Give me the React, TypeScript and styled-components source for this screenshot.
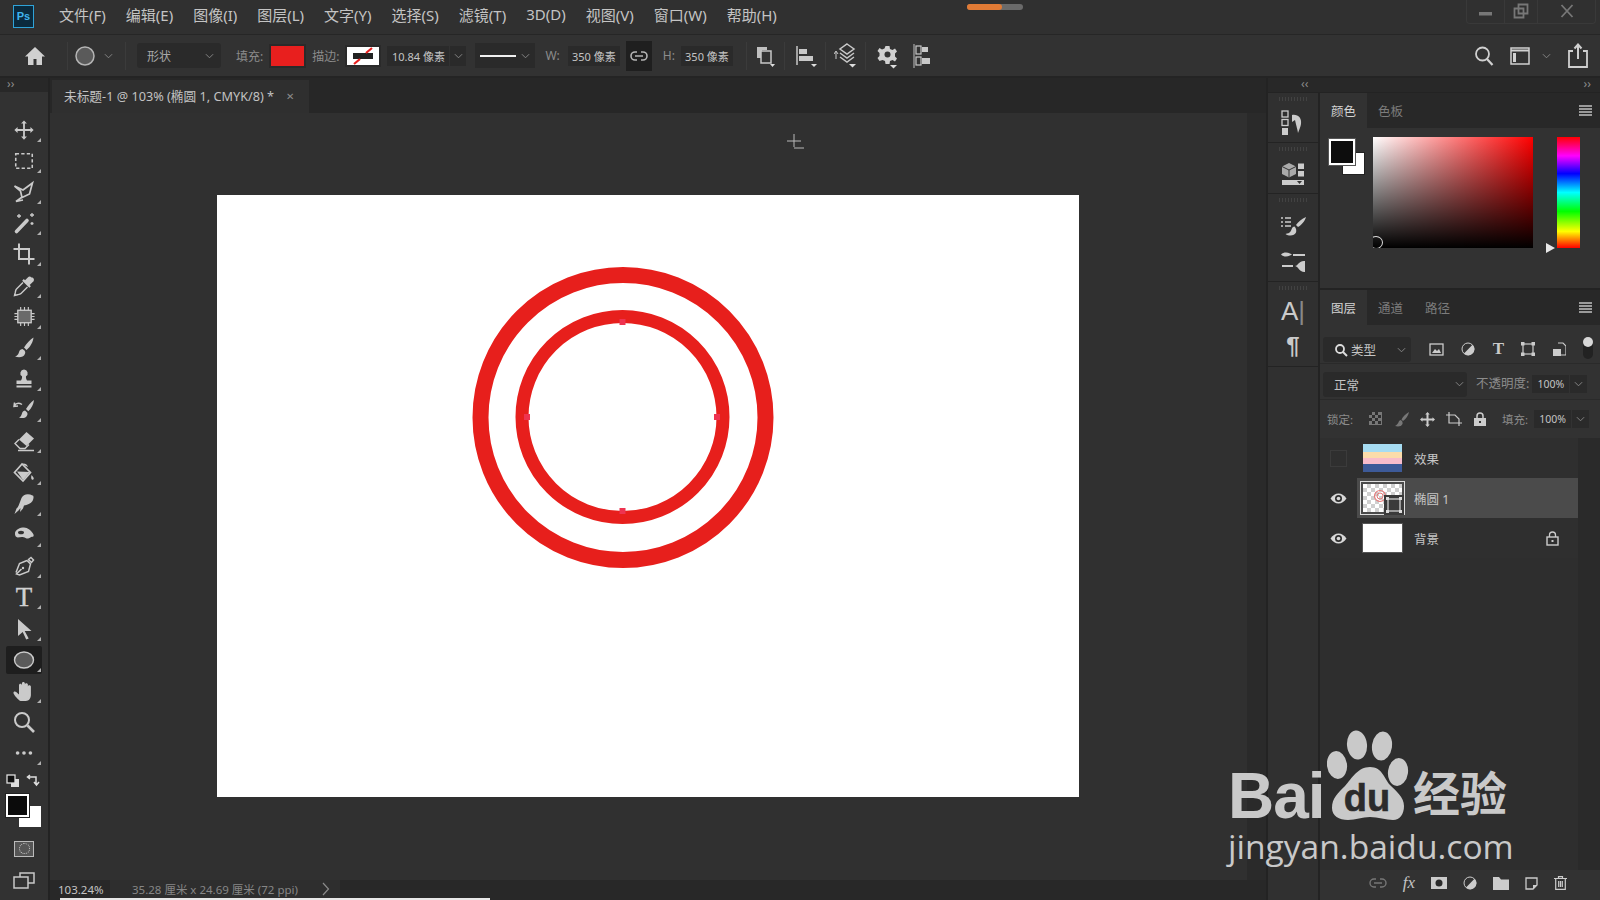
import styled, { createGlobalStyle } from "styled-components";
import type { ReactNode } from "react";

const uiFont = `"Noto Sans", "Noto Sans CJK SC", sans-serif`;

const GlobalStyle = createGlobalStyle`
    html, body {
        margin: 0;
        padding: 0;
        background: #2e2e2e;
        font-family: ${uiFont};
    }
`;

function Chevron() {
    return (
        <ChevronSvg viewBox="0 0 10 6">
            <path d="M1 1l4 4 4-4" fill="none" stroke="currentColor" strokeWidth="1"/>
        </ChevronSvg>
    );
}

function Ico({children, size = 24}: { children: ReactNode; size?: number }) {
    return <IcoSvg viewBox="0 0 24 24" $size={size}>{children}</IcoSvg>;
}

function HamburgerIcon() {
    return (
        <PanelMenu>
            <i/><i/><i/><i/>
        </PanelMenu>
    );
}

function EyeIcon() {
    return (
        <svg width="17" height="11" viewBox="0 0 17 11">
            <path d="M.5 5.5C3 2 5.5.5 8.5.5s5.5 1.5 8 5c-2.5 3.5-5 5-8 5s-5.5-1.5-8-5z" fill="#d8d8d8"/>
            <circle cx="8.5" cy="5.5" r="3.5" fill="#2f2f2f"/>
            <circle cx="8.5" cy="5.5" r="1.8" fill="#d8d8d8"/>
        </svg>
    );
}

const line = {fill: "none", stroke: "currentColor", strokeWidth: 1.7};

function getTools(): { icon: ReactNode; active?: boolean; flyout?: boolean }[] {
    return [
        {flyout: true, icon: <Ico size={22}><path d="M12 1.5l3.2 3.4h-2.2v6h6V8.7l3.5 3.3-3.5 3.3V13h-6v6.1h2.2L12 22.5l-3.2-3.4H11v-6H5v2.3L1.5 12 5 8.7V11h6V4.9H8.8z"/></Ico>},
        {flyout: true, icon: <Ico size={22}><rect x="3" y="4" width="18" height="16" {...line} strokeDasharray="3.6 2.4"/></Ico>},
        {flyout: true, icon: <Ico><path d="M2.5 6l8.5 4 9.5-7-3 11-7.5 3.5-1.5-6.5zM9.5 17.5L4 21.5l7-1.5" {...line}/></Ico>},
        {flyout: true, icon: <Ico><path d="M4.5 20.5L15 9.5" fill="none" stroke="currentColor" strokeWidth="3.6" strokeLinecap="round"/><path d="M7 3v4M5 5h4M20 2v4M18 4h4M20 11v3M18.5 12.5h3" {...line} strokeWidth={1.3}/></Ico>},
        {flyout: true, icon: <Ico><path d="M7 1.5V17h15.5M1.5 7H17v15.5" {...line} strokeWidth={2}/></Ico>},
        {flyout: true, icon: <Ico><path d="M19.5 3.5a2.6 2.6 0 0 0-3.7 0L13 6.3l-1.2-1.2-1.6 1.6 7.1 7.1 1.6-1.6-1.2-1.2 2.8-2.8a2.6 2.6 0 0 0 0-4.7z"/><path d="M11 8.5L4.5 15c-1 1-1 2.4-1.2 3.5l-.8 3 3-.8c1.1-.2 2.5-.2 3.5-1.2l6.500-6.500" {...line} strokeWidth={1.4}/></Ico>},
        {flyout: true, icon: <Ico size={23}><rect x="5" y="5.5" width="14" height="13" fill="#6a6a6a" stroke="currentColor" strokeWidth="1.4"/><path d="M8 2v3.5M12 2v3.5M16 2v3.5M8 18.5V22M12 18.5V22M16 18.5V22M1.5 9H5M1.5 12H5M1.5 15H5M19 9h3.5M19 12h3.5M19 15h3.5" {...line} strokeWidth={1.2}/></Ico>},
        {flyout: true, icon: <Ico><path d="M21.5 1.5c-3.2 2-7 6-9.5 10l2.5 2.5c3.800-3 6.500-8 7-12.500zM10.500 13c-2.500.3-3.200 2-3.700 3.800-.5 1.700-1.800 3.300-3.800 3.700 3.500 1.200 8.500 1.200 10-2.800.5-1.300.2-2.600-.5-3.300z"/></Ico>},
        {flyout: true, icon: <Ico><path d="M12 2.500a3.700 3.700 0 0 0-2 6.800c.3 1.700-.3 3.200-1 4.200H4.500V17h15v-3.500H15c-.7-1-1.300-2.500-1-4.200a3.700 3.700 0 0 0-2-6.800z"/><rect x="4.5" y="18.500" width="15" height="2"/></Ico>},
        {flyout: true, icon: <Ico><path d="M22 2c-3 2-6 5.500-8 9l2.300 2.300c3-2.800 5.300-7 5.700-11.300zM13 12.500c-2.200.3-2.700 2-3.200 3.400-.4 1.500-1.300 3-2.800 3.600 3 1.100 7 1 8.300-2.500.4-1.100.2-2.200-.4-2.800z"/><path d="M2 8c2-3 5-3.500 8-1.500M2.500 4.500L2 8.500l4-.5" {...line} strokeWidth={1.5}/></Ico>},
        {flyout: true, icon: <Ico><path d="M14.500 3L22 9.500 14.500 17l-7.500-6.500z"/><path d="M7 10.500L3 14.500l5 5h5l4-4M6 21.500h16" {...line} strokeWidth={1.4}/></Ico>},
        {flyout: true, icon: <Ico><path d="M10 3L2.500 11.500 11 20l7.500-8.500z" {...line}/><path d="M5 10.500L18 11l-7 8zM10 3c1-1 5-1 6 3M19.500 14c2 2 3 3.500 1.800 4.500-1.500 1-2.800-1-1.800-4.500z"/></Ico>},
        {flyout: true, icon: <Ico><path d="M20.500 3.500C16 1 11 2.500 9.500 6L8 10c-1 2-1.500 5-3.500 6.500L2.500 22l4-3.500 2-2.500-.5 4 3-3.500 1-3c3-.5 7-2 8.500-4.500 1.300-2.500 1.300-4.500.5-5.500z"/></Ico>},
        {flyout: true, icon: <Ico><path d="M3 10c.5-3.500 5-5.500 9-5.500 3.500 0 7.500 3 9.500 7 .5 1.300 0 2.500-1.500 2.300-1.200-.1-1.800 1.500-3.800 1.700-2 .2-3-1-4.500-1.300-2.500-.5-4 .2-6 .2C4 14.400 2.700 12.500 3 10z"/><ellipse cx="9" cy="9.5" rx="3" ry="1.8" fill="#323232"/></Ico>},
        {flyout: true, icon: <Ico><path d="M19 3.500l2.500 2.500-2 2.500-3-3zM15 6.500l3.500 3.500-2 7.500-9 3.500-3-1 5-5M15 6.500L7.500 9.500l-3.500 9" {...line} strokeWidth={1.5}/><circle cx="11" cy="14" r="1.2"/></Ico>},
        {flyout: true, icon: <ToolLetter>T</ToolLetter>},
        {flyout: true, icon: <Ico><path d="M6 2l13.500 12h-6.800l4 7.500-2.500 1-3.500-7.500L6 19z"/></Ico>},
        {flyout: true, active: true, icon: <Ico><ellipse cx="12" cy="12" rx="9.5" ry="8" fill="#5a5a5a" stroke="currentColor" strokeWidth="1.4"/></Ico>},
        {flyout: true, icon: <Ico><path d="M8.500 22c-2.500-1.300-6.500-6-7-7.800-.4-1.700 1.500-2.200 2.700-1.200L7 15.500V6.200c0-2 2.700-2 2.900 0V4.500c0-2 2.900-2 3 0v1c.2-1.800 3-1.800 3 .2v1.800c.2-1.700 3-1.700 3 .3V16c0 3-2 6-5 6z"/></Ico>},
        {icon: <Ico><circle cx="10" cy="10" r="7" {...line} strokeWidth={2}/><path d="M15.500 15.500L22 22" {...line} strokeWidth={2.6}/></Ico>},
        {flyout: true, icon: <Ico size={22}><circle cx="5" cy="12" r="2"/><circle cx="12" cy="12" r="2"/><circle cx="19" cy="12" r="2"/></Ico>},
    ];
}

function App() {
    return (
        <>
            <GlobalStyle/>
            <Page>
                <MenuBar>
                    <PsLogo>Ps</PsLogo>
                    <MenuList>
                        {["文件(F)", "编辑(E)", "图像(I)", "图层(L)", "文字(Y)", "选择(S)", "滤镜(T)", "3D(D)", "视图(V)", "窗口(W)", "帮助(H)"].map(m => (
                            <MenuItem key={m}>{m}</MenuItem>
                        ))}
                    </MenuList>
                    <ProgressTrack><ProgressFill/></ProgressTrack>
                    <WindowControls>
                        <WinButton $w={37}><svg width="14" height="12" viewBox="0 0 14 12"><rect x="0" y="7" width="13" height="3.5" fill="#777"/></svg></WinButton>
                        <WinButton $w={32}><svg width="16" height="16" viewBox="0 0 16 16"><path d="M5.5 1.5h9v9h-9zM1.5 5.5h9v9h-9z" fill="none" stroke="#777" strokeWidth="1.8"/></svg></WinButton>
                        <WinButton $w={57}><svg width="14" height="14" viewBox="0 0 14 14"><path d="M1.5 1l11 12M12.5 1l-11 12" stroke="#777" strokeWidth="1.8"/></svg></WinButton>
                    </WindowControls>
                </MenuBar>

                <OptionsBar>
                    <HomeButton>
                        <svg width="22" height="20" viewBox="0 0 22 20"><path d="M11 1L1 10.5h3V19h5.5v-6h3v6H18v-8.500h3z" fill="#d0d0d0"/></svg>
                    </HomeButton>
                    <OptSep/>
                    <ShapePicker>
                        <svg width="22" height="22" viewBox="0 0 22 22"><circle cx="11" cy="11" r="9" fill="#5a5a5a" stroke="#b5b5b5" strokeWidth="1.5"/></svg>
                        <Chevron/>
                    </ShapePicker>
                    <OptSep/>
                    <OptSelect $w={84} $ml={11}><span>形状</span><Chevron/></OptSelect>
                    <OptLabel $ml={15}>填充:</OptLabel>
                    <ColorSwatch $ml={8}/>
                    <OptLabel $ml={8}>描边:</OptLabel>
                    <StrokeSwatch $ml={8}>
                        <svg width="32" height="18" viewBox="0 0 32 18">
                            <rect x="6" y="6" width="20" height="6" fill="#222"/>
                            <path d="M25 1L19 6M13 12L7 17" stroke="#e8201f" strokeWidth="2.2"/>
                        </svg>
                    </StrokeSwatch>
                    <OptInput $w={62} $ml={8}>10.84 像素</OptInput>
                    <OptDrop><Chevron/></OptDrop>
                    <LineSelect><LineSample/><Chevron/></LineSelect>
                    <OptLabel $ml={10}>W:</OptLabel>
                    <OptInput $w={52} $ml={8}>350 像素</OptInput>
                    <LinkButton>
                        <svg width="18" height="12" viewBox="0 0 18 12"><path d="M7 2H5a4 4 0 0 0 0 8h2M11 2h2a4 4 0 0 1 0 8h-2M5 6h8" fill="none" stroke="#b5b5b5" strokeWidth="1.6"/></svg>
                    </LinkButton>
                    <OptLabel $ml={11}>H:</OptLabel>
                    <OptInput $w={52} $ml={6}>350 像素</OptInput>
                    <OptSep $ml={13}/>
                    <OptIcon $ml={7}>
                        <svg width="22" height="24" viewBox="0 0 22 24"><path d="M3 3h10v3H8v8H3z" fill="#c0c0c0"/><rect x="7" y="7" width="10" height="12" fill="#333" stroke="#c8c8c8" strokeWidth="1.5"/><path d="M16 20h5l-2.5 3z" fill="#ddd"/></svg>
                    </OptIcon>
                    <OptSep $ml={8}/>
                    <OptIcon $ml={9}>
                        <svg width="24" height="24" viewBox="0 0 24 24"><path d="M3 2v19" stroke="#c8c8c8" strokeWidth="1.5"/><rect x="5" y="5" width="8" height="5" fill="#c8c8c8"/><rect x="5" y="12" width="14" height="5" fill="#c8c8c8"/><path d="M17 20h6l-3 3z" fill="#ddd"/></svg>
                    </OptIcon>
                    <OptSep $ml={7}/>
                    <OptIcon $ml={8}>
                        <svg width="24" height="26" viewBox="0 0 24 26"><path d="M13 1l7 5-7 5-7-5z" fill="none" stroke="#c8c8c8" strokeWidth="1.5"/><path d="M6 10l7 5 7-5M6 14l7 5 7-5" fill="none" stroke="#c8c8c8" strokeWidth="1.5"/><path d="M2 16V9M0 11l2-3 2 3" fill="none" stroke="#c8c8c8"/><path d="M15 21h7l-3.5 3.5z" fill="#ddd"/></svg>
                    </OptIcon>
                    <OptSep $ml={7}/>
                    <OptIcon $ml={10}>
                        <svg width="24" height="26" viewBox="0 0 24 26"><path d="M9.5 2h4l.5 3 2.5 1 2.5-1.5 2 3-2 2v3l2 2-2 3-2.5-1.5-2.5 1-.5 3h-4l-.5-3-2.5-1L3.500 17l-2-3 2-2V9l-2-2 2-3L6 5.500l2.500-1z" fill="#d0d0d0" transform="translate(0 1)"/><circle cx="11.5" cy="11.5" r="3" fill="#333"/><path d="M14 22h7l-3.5 3.5z" fill="#ddd"/></svg>
                    </OptIcon>
                    <OptIcon $ml={11}>
                        <svg width="20" height="26" viewBox="0 0 20 26"><path d="M3 1v24" stroke="#c0c0c0"/><rect x="5" y="3" width="5" height="8" fill="none" stroke="#c8c8c8" strokeWidth="1.2"/><rect x="11" y="4" width="6" height="5" fill="#c8c8c8"/><rect x="5" y="14" width="5" height="8" fill="none" stroke="#c8c8c8" strokeWidth="1.2"/><rect x="11" y="15" width="8" height="6" fill="#c8c8c8"/></svg>
                    </OptIcon>
                    <OptRight>
                        <svg width="20" height="22" viewBox="0 0 20 22"><circle cx="8.5" cy="9" r="6.5" fill="none" stroke="#d0d0d0" strokeWidth="1.8"/><path d="M13 14l5.5 6" stroke="#d0d0d0" strokeWidth="2.2"/></svg>
                        <WorkspaceBox><svg width="20" height="18" viewBox="0 0 20 18"><rect x="1" y="1" width="18" height="16" fill="none" stroke="#d0d0d0" strokeWidth="1.5"/><path d="M1 3.5h18" stroke="#d0d0d0" strokeWidth="2"/><rect x="3" y="6" width="3" height="9" fill="#d0d0d0"/></svg><Chevron/></WorkspaceBox>
                        <svg width="22" height="26" viewBox="0 0 22 26"><path d="M6 8H2v16h18V8h-4" fill="none" stroke="#d0d0d0" strokeWidth="1.8"/><path d="M11 16V2M7.5 5.500L11 1.500l3.500 4" fill="none" stroke="#d0d0d0" strokeWidth="2"/></svg>
                    </OptRight>
                </OptionsBar>

                <Workspace>
                    <ToolBar>
                        <CollapseStrip>››</CollapseStrip>
                        <ToolList>
                            {getTools().map((t, i) => (
                                <ToolCell key={i}>
                                    <ToolButton $active={t.active} $flyout={t.flyout}>{t.icon}</ToolButton>
                                </ToolCell>
                            ))}
                        </ToolList>
                        <MiniRow>
                            <svg width="14" height="14" viewBox="0 0 14 14"><rect x="5" y="5" width="8" height="8" fill="#ddd"/><rect x="1" y="1" width="8" height="8" fill="#111" stroke="#ddd" strokeWidth="1.3"/></svg>
                            <svg width="14" height="14" viewBox="0 0 14 14"><path d="M2 3h8v7M8 8l2.5 3L13 8M4 1L1.5 3 4 5" fill="none" stroke="#ddd" strokeWidth="1.5"/></svg>
                        </MiniRow>
                        <SwatchStack>
                            <BackSwatch/>
                            <FrontSwatch/>
                        </SwatchStack>
                        <QuickMask><i/></QuickMask>
                        <ScreenMode>
                            <svg width="22" height="17" viewBox="0 0 22 17"><rect x="7" y="1" width="14" height="10" fill="none" stroke="#c8c8c8" strokeWidth="1.5"/><rect x="1" y="5" width="14" height="11" fill="#323232" stroke="#c8c8c8" strokeWidth="1.5"/></svg>
                        </ScreenMode>
                    </ToolBar>

                    <DocColumn>
                        <TabBar>
                            <DocTab>
                                <span>未标题-1 @ 103% (椭圆 1, CMYK/8) *</span>
                                <TabClose>✕</TabClose>
                            </DocTab>
                        </TabBar>
                        <DocBody>
                            <Pasteboard>
                                <CursorMark>
                                    <svg width="20" height="20" viewBox="0 0 20 20"><path d="M8 1v13M1 8h14M8 15h10" stroke="#b9b9b9" strokeWidth="1"/></svg>
                                </CursorMark>
                                <Artboard>
                                    <svg width="862" height="602" viewBox="0 0 862 602">
                                        <circle cx="406" cy="222.5" r="142.5" fill="none" stroke="#e71f1c" strokeWidth="16"/>
                                        <circle cx="405.5" cy="222" r="100.5" fill="none" stroke="#e71f1c" strokeWidth="13"/>
                                        <g fill="#ee3350">
                                            <rect x="402.5" y="124" width="6" height="6"/>
                                            <rect x="402.5" y="313" width="6" height="6"/>
                                            <rect x="307" y="219" width="6" height="6"/>
                                            <rect x="497" y="219" width="6" height="6"/>
                                        </g>
                                    </svg>
                                </Artboard>
                            </Pasteboard>
                            <VScroll/>
                        </DocBody>
                        <StatusBar>
                            <StatusRow>
                                <ZoomValue>103.24%</ZoomValue>
                                <DocInfo>
                                    <span>35.28 厘米 x 24.69 厘米 (72 ppi)</span>
                                    <svg width="8" height="14" viewBox="0 0 8 14"><path d="M1 1l5.5 6L1 13" fill="none" stroke="#8a8a8a" strokeWidth="1.2"/></svg>
                                </DocInfo>
                            </StatusRow>
                            <EdgeLine/>
                        </StatusBar>
                    </DocColumn>

                    <DockArea>
                        <DockStrip>
                            <span>‹‹</span>
                            <span>››</span>
                        </DockStrip>
                        <DockRow>
                            <IconDock>
                                <DockGroup $h={50} $top={12}>
                                    <svg width="24" height="28" viewBox="0 0 24 28"><rect x="1" y="1" width="6" height="6" fill="none" stroke="#ccc" strokeWidth="1.3"/><rect x="1" y="9.5" width="6" height="6" fill="none" stroke="#ccc" strokeWidth="1.3"/><rect x="1" y="18" width="6" height="7" fill="#ccc"/><path d="M11 5c6-1 10 3 9 9-.4 3-2 6-3 9-.5-4-2-8-3-13l-3 2z" fill="#ccc"/></svg>
                                </DockGroup>
                                <DockGroup $h={51} $top={12}>
                                    <svg width="24" height="24" viewBox="0 0 24 24"><path d="M8 1l7 3.5V12l-7 3.5L1 12V4.500z" fill="#aaa"/><path d="M8 8v7.5M1 4.5L8 8l7-3.500" stroke="#333" fill="none"/><rect x="17" y="1.5" width="6" height="5.5" fill="#ccc"/><rect x="17" y="9" width="6" height="5.5" fill="#ccc"/><rect x="1" y="18" width="22" height="5" fill="#ccc"/><path d="M16 19h5l-2.5 3z" fill="#333"/></svg>
                                </DockGroup>
                                <DockGroup $h={88} $gap={13} $top={14}>
                                    <svg width="26" height="22" viewBox="0 0 26 22"><path d="M1 2h2M5 2h6M1 6h2M5 6h6M1 10h2M5 10h6" stroke="#ccc" strokeWidth="1.6"/><path d="M26 1c-4 1.5-8 5-10 8l2 2c3.5-2 7-6 8-10zM14.5 10.5c-3 .5-2.5 3-4 5-1 1.5-3 2-5 2.5 3.5 2.5 9 2 10.5-1.5.7-2 .1-4.5-1.5-6z" fill="#ccc"/></svg>
                                    <svg width="26" height="22" viewBox="0 0 26 22"><path d="M1 3.5c2.5-2.5 6-2.500 9-1l2 1-2 1c-3 1.500-6.500 1.500-9-1z" fill="#ccc"/><path d="M13 4h12M2 15h11" stroke="#ccc" strokeWidth="2"/><path d="M25 10v11c-2 .5-5-1-7-4-.7-1-2-2-3-2 1 0 2.300-1 3-2 1.500-2 4-3.500 7-3z" fill="#ccc"/></svg>
                                </DockGroup>
                                <DockGroup $h={85} $gap={7} $top={8}>
                                    <DockLetter>A<em>|</em></DockLetter>
                                    <DockLetter $small>¶</DockLetter>
                                </DockGroup>
                            </IconDock>
                            <Panels>
                                <ColorPanel>
                                    <PanelTabs>
                                        <PanelTab $active>颜色</PanelTab>
                                        <PanelTab>色板</PanelTab>
                                        <HamburgerIcon/>
                                    </PanelTabs>
                                    <ColorBody>
                                        <PanelSwatches>
                                            <PanelBack/>
                                            <PanelFront/>
                                        </PanelSwatches>
                                        <ColorField><FieldPicker/></ColorField>
                                        <HueSlider><HueThumb/></HueSlider>
                                    </ColorBody>
                                </ColorPanel>
                                <LayersPanel>
                                    <PanelTabs>
                                        <PanelTab $active>图层</PanelTab>
                                        <PanelTab>通道</PanelTab>
                                        <PanelTab>路径</PanelTab>
                                        <HamburgerIcon/>
                                    </PanelTabs>
                                    <FilterRow>
                                        <FilterSelect>
                                            <svg width="14" height="14" viewBox="0 0 14 14"><circle cx="6" cy="6" r="4" fill="none" stroke="#ddd" strokeWidth="1.8"/><path d="M9 9l4 4" stroke="#ddd" strokeWidth="2"/></svg>
                                            <span>类型</span>
                                            <Chevron/>
                                        </FilterSelect>
                                        <FilterIcons>
                                            <svg width="15" height="13" viewBox="0 0 15 13"><rect x="1" y="1" width="13" height="11" fill="none" stroke="#ccc" strokeWidth="1.3"/><path d="M3 10l3-4 2 2 2-2 2 4z" fill="#ccc"/></svg>
                                            <svg width="14" height="14" viewBox="0 0 14 14"><circle cx="7" cy="7" r="6" fill="#333" stroke="#ccc" strokeWidth="1"/><path d="M11.5 2.8A6 6 0 0 1 3 11.5z" fill="#ccc"/></svg>
                                            <FilterLetter>T</FilterLetter>
                                            <svg width="14" height="14" viewBox="0 0 14 14"><rect x="2" y="2" width="10" height="10" fill="none" stroke="#ccc" strokeWidth="1.2"/><g fill="#ccc"><rect width="3.5" height="3.5"/><rect x="10.5" width="3.5" height="3.5"/><rect y="10.5" width="3.5" height="3.5"/><rect x="10.5" y="10.5" width="3.5" height="3.5"/></g></svg>
                                            <svg width="13" height="14" viewBox="0 0 13 14"><path d="M5 1h5l3 3v9H8" fill="none" stroke="#ccc" strokeWidth="1.2"/><rect x="0" y="7" width="8" height="7" fill="#ccc"/></svg>
                                            <FilterToggle/>
                                        </FilterIcons>
                                    </FilterRow>
                                    <BlendRow>
                                        <BlendSelect><span>正常</span><Chevron/></BlendSelect>
                                        <OpacityLabel>不透明度:</OpacityLabel>
                                        <PercentBox $ml={3}>100%</PercentBox>
                                        <PercentDrop><Chevron/></PercentDrop>
                                    </BlendRow>
                                    <LockRow>
                                        <RowLabel $ml={7}>锁定:</RowLabel>
                                        <LockIcons>
                                            <LockCell>
                                                <svg width="13" height="13" viewBox="0 0 13 13"><rect width="13" height="13" fill="#777"/><path d="M0 0h3v3H0zM6 0h3v3H6zM3 3h3v3H3zM9 3h3v3H9zM0 6h3v3H0zM6 6h3v3H6zM3 9h3v3H3zM9 9h3v3H9z" fill="#2f2f2f"/></svg>
                                            </LockCell>
                                            <LockCell>
                                                <svg width="15" height="15" viewBox="0 0 15 15"><path d="M15 0c-3 1.5-6 4.5-7.5 7.5L9 9c3-2 5.5-5.5 6-9zM6.5 8C4 9 5 12 1 14c3 1 6.5.5 7.500-2 .4-1.500 0-3-2-4z" fill="#777"/></svg>
                                            </LockCell>
                                            <LockCell>
                                                <svg width="15" height="15" viewBox="0 0 15 15"><path d="M7.5 0l2.3 2.5H8.500v4h4V5.200L15 7.500l-2.500 2.300V8.500h-4v4h1.300L7.500 15l-2.300-2.500h1.300v-4h-4v1.300L0 7.500l2.500-2.300v1.300h4v-4H5.200z" fill="#ccc"/></svg>
                                            </LockCell>
                                            <LockCell>
                                                <svg width="16" height="14" viewBox="0 0 16 14"><path d="M3 0v11h13M0 3h9l4 4v7" fill="none" stroke="#ccc" strokeWidth="1.2"/></svg>
                                            </LockCell>
                                            <LockCell>
                                                <svg width="12" height="14" viewBox="0 0 12 14"><path d="M3 6V4a3 3 0 0 1 6 0v2" fill="none" stroke="#ccc" strokeWidth="1.5"/><rect y="6" width="12" height="8" fill="#ccc"/><rect x="5" y="9" width="2" height="2" fill="#333"/></svg>
                                            </LockCell>
                                        </LockIcons>
                                        <RowLabel $ml={13}>填充:</RowLabel>
                                        <PercentBox $ml={6}>100%</PercentBox>
                                        <PercentDrop><Chevron/></PercentDrop>
                                    </LockRow>
                                    <LayerArea>
                                        <LayerList>
                                            <LayerRow>
                                                <EyeCell><HiddenBox/></EyeCell>
                                                <LayerBody>
                                                    <StripeThumb/>
                                                    <LayerName>效果</LayerName>
                                                </LayerBody>
                                            </LayerRow>
                                            <LayerRow>
                                                <EyeCell><EyeIcon/></EyeCell>
                                                <LayerBody $selected>
                                                    <CheckerThumb>
                                                        <svg width="38" height="28" viewBox="0 0 38 28"><circle cx="17" cy="12" r="5.5" fill="none" stroke="#e57a7a" strokeWidth="1.2"/><circle cx="17" cy="12" r="3" fill="none" stroke="#e57a7a" strokeWidth="1"/></svg>
                                                        <ShapeBadge>
                                                            <svg width="16" height="16" viewBox="0 0 16 16"><rect x="2" y="2" width="12" height="12" fill="none" stroke="#ddd" strokeWidth="1.2"/><g fill="#ddd"><rect width="3" height="3"/><rect x="13" width="3" height="3"/><rect y="13" width="3" height="3"/><rect x="13" y="13" width="3" height="3"/></g></svg>
                                                        </ShapeBadge>
                                                    </CheckerThumb>
                                                    <LayerName>椭圆 1</LayerName>
                                                </LayerBody>
                                            </LayerRow>
                                            <LayerRow>
                                                <EyeCell><EyeIcon/></EyeCell>
                                                <LayerBody>
                                                    <WhiteThumb/>
                                                    <LayerName>背景</LayerName>
                                                    <LayerLock>
                                                        <svg width="13" height="15" viewBox="0 0 13 15"><path d="M3.5 6V4a3 3 0 0 1 6 0v2" fill="none" stroke="#ccc" strokeWidth="1.3"/><rect x="1" y="6" width="11" height="8" fill="none" stroke="#ccc" strokeWidth="1.4"/><rect x="5.5" y="9" width="2" height="2" fill="#ccc"/></svg>
                                                    </LayerLock>
                                                </LayerBody>
                                            </LayerRow>
                                        </LayerList>
                                        <LayerScroll/>
                                    </LayerArea>
                                    <LayerFooter>
                                        <svg width="18" height="10" viewBox="0 0 18 10"><path d="M7 1H5a4 4 0 0 0 0 8h2M11 1h2a4 4 0 0 1 0 8h-2M5 5h8" fill="none" stroke="#777" strokeWidth="1.4"/></svg>
                                        <FxLabel>fx</FxLabel>
                                        <svg width="16" height="12" viewBox="0 0 16 12"><rect width="16" height="12" fill="#ccc"/><circle cx="8" cy="6" r="3.5" fill="#2b2b2b"/></svg>
                                        <svg width="14" height="14" viewBox="0 0 14 14"><circle cx="7" cy="7" r="6" fill="#333" stroke="#ccc"/><path d="M11.5 2.8A6 6 0 0 1 3 11.5z" fill="#ccc"/></svg>
                                        <svg width="16" height="13" viewBox="0 0 16 13"><path d="M0 0h6l2 2.5h8V13H0z" fill="#ccc"/></svg>
                                        <svg width="13" height="13" viewBox="0 0 13 13"><path d="M1 1h11v7l-4 4H1z" fill="none" stroke="#ccc" strokeWidth="1.3"/><path d="M8 8h4l-4 4z" fill="#ccc"/></svg>
                                        <svg width="13" height="14" viewBox="0 0 13 14"><path d="M0 2.500h13M4.500 2V.7h4V2M1.700 3v10.300h9.600V3M4.700 5v6M6.500 5v6M8.300 5v6" fill="none" stroke="#ccc" strokeWidth="1.2"/></svg>
                                    </LayerFooter>
                                </LayersPanel>
                            </Panels>
                        </DockRow>
                    </DockArea>
                </Workspace>

                <Watermark>
                    <WatermarkTop>
                        <BaiText>Bai</BaiText>
                        <PawSvg viewBox="1327 730 83 92">
                            <g fill="#c9c9c9">
                                <ellipse cx="1337" cy="765" rx="10" ry="14" transform="rotate(-8 1337 765)"/>
                                <ellipse cx="1357" cy="745" rx="10" ry="14.5" transform="rotate(-6 1357 745)"/>
                                <ellipse cx="1382" cy="746" rx="10" ry="14.5" transform="rotate(8 1382 746)"/>
                                <ellipse cx="1398" cy="772" rx="10" ry="14" transform="rotate(8 1398 772)"/>
                                <path d="M1370 767C1358 767 1352 778 1345 786C1338 793 1332 798 1332 808C1332 816 1339 820 1348 820C1356 820 1362 817 1370 817C1378 817 1386 820 1393 820C1400 820 1404 814 1404 806C1404 797 1396 791 1390 785C1384 778 1382 767 1370 767Z"/>
                            </g>
                            <DuText x="1367" y="811" textAnchor="middle">du</DuText>
                        </PawSvg>
                        <JingyanCn>经验</JingyanCn>
                    </WatermarkTop>
                    <WatermarkUrl>jingyan.baidu.com</WatermarkUrl>
                </Watermark>
            </Page>
        </>
    );
}

const Page = styled.div`
    position: relative;
    width: 1600px;
    height: 900px;
    display: flex;
    flex-direction: column;
    overflow: hidden;
    background: #2e2e2e;
    color: #c8c8c8;
`;

const ChevronSvg = styled.svg`
    width: 9px;
    height: 6px;
    flex: none;
    color: #8c8c8c;
`;

const IcoSvg = styled.svg<{ $size: number }>`
    width: ${p => p.$size}px;
    height: ${p => p.$size}px;
    fill: currentColor;
    color: #cacaca;
`;

const MenuBar = styled.header`
    height: 35px;
    flex: none;
    display: flex;
    align-items: center;
    background: #303030;
    border-bottom: 1px solid #262626;
    box-sizing: border-box;
`;

const PsLogo = styled.div`
    width: 19px;
    height: 21px;
    margin: 0 0 2px 13px;
    border: 1px solid #2fa3d8;
    background: #0b2a3d;
    color: #3fb4ee;
    font: 700 11px "Liberation Sans", sans-serif;
    display: flex;
    align-items: center;
    justify-content: center;
`;

const MenuList = styled.nav`
    display: flex;
    gap: 20px;
    margin-left: 25px;
    padding-bottom: 5px;
`;

const MenuItem = styled.span`
    font-size: 15px;
    color: #c4c4c4;
    white-space: nowrap;
`;

const ProgressTrack = styled.div`
    position: absolute;
    left: 967px;
    top: 4px;
    width: 56px;
    height: 6px;
    border-radius: 3px;
    background: #6a6a6a;
`;

const ProgressFill = styled.div`
    width: 35px;
    height: 100%;
    border-radius: 3px;
    background: #e07a35;
`;

const WindowControls = styled.div`
    margin-left: auto;
    margin-right: 4px;
    height: 24px;
    margin-bottom: 11px;
    display: flex;
    border: 1px solid #393939;
    border-top: none;
    border-radius: 0 0 4px 4px;
`;

const WinButton = styled.div<{ $w: number }>`
    width: ${p => p.$w}px;
    display: flex;
    align-items: center;
    justify-content: center;
    border-right: 1px solid #393939;

    &:last-child {
        border-right: none;
    }
`;

const OptionsBar = styled.div`
    height: 43px;
    flex: none;
    display: flex;
    align-items: center;
    background: #323232;
    border-bottom: 2px solid #242424;
    box-sizing: border-box;
`;

const HomeButton = styled.div`
    width: 67px;
    display: flex;
    justify-content: center;
    padding-left: 3px;
    box-sizing: border-box;
`;

const OptSep = styled.div<{ $ml?: number }>`
    width: 1px;
    height: 28px;
    margin-left: ${p => p.$ml ?? 0}px;
    background: #3b3b3b;
    flex: none;
`;

const ShapePicker = styled.div`
    width: 57px;
    display: flex;
    align-items: center;
    gap: 8px;
    padding-left: 6px;
    box-sizing: border-box;
`;

const OptSelect = styled.div<{ $w: number; $ml?: number }>`
    width: ${p => p.$w}px;
    height: 25px;
    margin-left: ${p => p.$ml ?? 0}px;
    display: flex;
    align-items: center;
    justify-content: space-between;
    padding: 0 7px 0 10px;
    box-sizing: border-box;
    background: #2a2a2a;
    border-radius: 3px;
    font-size: 12px;
    color: #a8a8a8;
    flex: none;
`;

const OptLabel = styled.span<{ $ml?: number }>`
    margin-left: ${p => p.$ml ?? 0}px;
    font-size: 12px;
    color: #8c8c8c;
    white-space: nowrap;
`;

const ColorSwatch = styled.div<{ $ml?: number }>`
    width: 33px;
    height: 20px;
    margin-left: ${p => p.$ml ?? 0}px;
    background: #e81f1e;
    box-shadow: 0 0 0 2px #2a2a2a;
    flex: none;
`;

const StrokeSwatch = styled.div<{ $ml?: number }>`
    width: 32px;
    height: 18px;
    margin-left: ${p => p.$ml ?? 0}px;
    background: #fff;
    box-shadow: 0 0 0 2px #2a2a2a;
    flex: none;
    line-height: 0;
`;

const OptInput = styled.div<{ $w: number; $ml?: number }>`
    width: ${p => p.$w}px;
    height: 20px;
    margin-left: ${p => p.$ml ?? 0}px;
    display: flex;
    align-items: center;
    justify-content: center;
    background: #2a2a2a;
    font-size: 11px;
    color: #c4c4c4;
    white-space: nowrap;
    flex: none;
`;

const OptDrop = styled.div`
    width: 16px;
    height: 20px;
    margin-left: 1px;
    display: flex;
    align-items: center;
    justify-content: center;
    background: #2a2a2a;
    flex: none;
`;

const LineSelect = styled.div`
    width: 60px;
    height: 25px;
    margin-left: 9px;
    display: flex;
    align-items: center;
    gap: 5px;
    padding-left: 5px;
    box-sizing: border-box;
    background: #2a2a2a;
    flex: none;
`;

const LineSample = styled.div`
    width: 36px;
    height: 2px;
    background: #f0f0f0;
`;

const LinkButton = styled.div`
    width: 26px;
    height: 30px;
    margin-left: 6px;
    background: #1f1f1f;
    display: flex;
    align-items: center;
    justify-content: center;
    flex: none;
`;

const OptIcon = styled.div<{ $ml?: number }>`
    margin-left: ${p => p.$ml ?? 0}px;
    line-height: 0;
    flex: none;
`;

const OptRight = styled.div`
    margin-left: auto;
    margin-right: 11px;
    display: flex;
    align-items: center;
    gap: 16px;
`;

const WorkspaceBox = styled.div`
    display: flex;
    align-items: center;
    gap: 12px;
`;

const Workspace = styled.div`
    flex: 1;
    min-height: 0;
    display: flex;
`;

const ToolBar = styled.aside`
    width: 48px;
    flex: none;
    display: flex;
    flex-direction: column;
    background: #323232;
    border-right: 2px solid #232323;
`;

const CollapseStrip = styled.div`
    height: 14px;
    background: #282828;
    font-size: 12px;
    line-height: 11px;
    color: #8c8c8c;
    padding-left: 7px;
`;

const ToolList = styled.div`
    margin-top: 22px;
    display: flex;
    flex-direction: column;
`;

const ToolCell = styled.div`
    height: 31.2px;
    display: flex;
    align-items: center;
    justify-content: center;
`;

const ToolButton = styled.div<{ $active?: boolean; $flyout?: boolean }>`
    position: relative;
    width: 36px;
    height: 28px;
    display: flex;
    align-items: center;
    justify-content: center;
    border-radius: 2px;
    background: ${p => p.$active ? "#1e1e1e" : "transparent"};

    ${p => p.$flyout && `
        &::after {
            content: "";
            position: absolute;
            right: 1px;
            bottom: 2px;
            border-left: 4px solid transparent;
            border-bottom: 4px solid #b0b0b0;
        }
    `}
`;

const ToolLetter = styled.span`
    font: 400 27px "Liberation Serif", serif;
    line-height: 1;
    color: #d0d0d0;
    -webkit-text-stroke: 0.4px #d0d0d0;
`;

const MiniRow = styled.div`
    height: 14px;
    margin-top: 5px;
    padding: 0 8px 0 6px;
    display: flex;
    justify-content: space-between;
    align-items: center;
`;

const SwatchStack = styled.div`
    position: relative;
    width: 36px;
    height: 34px;
    margin: 6px 0 0 6px;
`;

const FrontSwatch = styled.div`
    position: absolute;
    left: 0;
    top: 0;
    width: 19px;
    height: 19px;
    border: 2px solid #fff;
    background: #0b0b0b;
    box-shadow: 0 0 0 1px #222;
`;

const BackSwatch = styled.div`
    position: absolute;
    left: 13px;
    top: 12px;
    width: 22px;
    height: 21px;
    background: #fff;
`;

const QuickMask = styled.div`
    width: 20px;
    height: 16px;
    margin: 13px 0 0 14px;
    border: 1px solid #bbb;
    background: #555;
    display: flex;
    align-items: center;
    justify-content: center;
    box-sizing: border-box;

    i {
        width: 9px;
        height: 9px;
        border-radius: 50%;
        border: 1px dotted #ccc;
    }
`;

const ScreenMode = styled.div`
    margin: 15px 0 0 13px;
    line-height: 0;
`;

const DocColumn = styled.main`
    width: 1216px;
    flex: none;
    display: flex;
    flex-direction: column;
`;

const TabBar = styled.div`
    height: 35px;
    flex: none;
    display: flex;
    align-items: flex-end;
    background: #272727;
    padding-left: 2px;
`;

const DocTab = styled.div`
    width: 257px;
    height: 33px;
    display: flex;
    align-items: center;
    justify-content: space-between;
    padding: 0 15px 2px 12px;
    box-sizing: border-box;
    background: #2f2f2f;
    font-size: 12.7px;
    color: #c2c2c2;
    white-space: nowrap;
`;

const TabClose = styled.span`
    font-size: 10px;
    color: #8c8c8c;
`;

const DocBody = styled.div`
    flex: 1;
    min-height: 0;
    display: flex;
`;

const Pasteboard = styled.div`
    position: relative;
    flex: 1;
    padding: 82px 0 0 167px;
    background: #303030;
`;

const Artboard = styled.div`
    width: 862px;
    height: 602px;
    background: #fff;
    line-height: 0;
`;

const CursorMark = styled.div`
    position: absolute;
    left: 736px;
    top: 20px;
    line-height: 0;
`;

const VScroll = styled.div`
    width: 19px;
    flex: none;
    background: #2a2a2a;
`;

const StatusBar = styled.footer`
    height: 20px;
    flex: none;
    display: flex;
    flex-direction: column;
    background: #282828;
`;

const StatusRow = styled.div`
    height: 18px;
    display: flex;
    align-items: center;
`;

const ZoomValue = styled.div`
    width: 60px;
    padding-left: 8px;
    box-sizing: border-box;
    font-size: 11.5px;
    color: #c4c4c4;
`;

const DocInfo = styled.div`
    width: 230px;
    height: 18px;
    display: flex;
    align-items: center;
    justify-content: space-between;
    padding: 0 10px 0 22px;
    box-sizing: border-box;
    background: #2e2e2e;
    font-size: 11.5px;
    color: #868686;
    white-space: nowrap;
`;

const EdgeLine = styled.div`
    width: 430px;
    height: 2px;
    margin-left: 10px;
    background: #e8e8e8;
`;

const DockArea = styled.div`
    flex: 1;
    min-width: 0;
    display: flex;
    flex-direction: column;
    border-left: 2px solid #232323;
`;

const DockStrip = styled.div`
    height: 15px;
    flex: none;
    display: flex;
    justify-content: space-between;
    padding: 0 9px 0 33px;
    background: #282828;
    font-size: 12px;
    line-height: 11px;
    color: #8c8c8c;
    border-bottom: 1px solid #232323;
    box-sizing: border-box;
`;

const DockRow = styled.div`
    flex: 1;
    min-height: 0;
    display: flex;
`;

const IconDock = styled.div`
    width: 50px;
    flex: none;
    background: #303030;
    border-right: 2px solid #232323;
`;

const DockGroup = styled.div<{ $h: number; $gap?: number; $top: number }>`
    position: relative;
    height: ${p => p.$h}px;
    display: flex;
    flex-direction: column;
    align-items: center;
    justify-content: center;
    gap: ${p => p.$gap ?? 0}px;
    padding-top: ${p => p.$top}px;
    border-bottom: 1px solid #232323;
    box-sizing: border-box;

    &::before {
        content: "";
        position: absolute;
        left: 11px;
        right: 11px;
        top: 4px;
        height: 4px;
        background: repeating-linear-gradient(to right, #424242 0 1px, transparent 1px 3px);
    }
`;

const DockLetter = styled.div<{ $small?: boolean }>`
    font: ${p => p.$small ? "700 24px" : "400 26px"} "Liberation Sans", sans-serif;
    line-height: 28px;
    color: #cacaca;

    em {
        font-style: normal;
        font-weight: 300;
        color: #888;
    }
`;

const Panels = styled.div`
    flex: 1;
    min-width: 0;
    display: flex;
    flex-direction: column;
`;

const ColorPanel = styled.section`
    height: 195px;
    flex: none;
    background: #323232;
    border-bottom: 2px solid #232323;
`;

const PanelTabs = styled.div`
    position: relative;
    height: 35px;
    display: flex;
    background: #282828;
`;

const PanelTab = styled.div<{ $active?: boolean }>`
    width: 47px;
    display: flex;
    align-items: center;
    justify-content: center;
    font-size: 12.5px;
    color: ${p => p.$active ? "#d4d4d4" : "#7c7c7c"};
    background: ${p => p.$active ? "#323232" : "transparent"};
`;

const PanelMenu = styled.div`
    position: absolute;
    right: 8px;
    top: 12px;
    width: 13px;
    display: flex;
    flex-direction: column;
    gap: 1px;

    i {
        height: 2px;
        background: #9a9a9a;
    }
`;

const ColorBody = styled.div`
    display: grid;
    grid-template-columns: 53px 160px 184px;
    padding-top: 9px;
`;

const PanelSwatches = styled.div`
    position: relative;
    height: 40px;
    margin-top: 2px;
`;

const PanelFront = styled.div`
    position: absolute;
    left: 9px;
    top: 0;
    width: 22px;
    height: 22px;
    background: #0d0d0d;
    border: 2px solid #fff;
    box-shadow: 0 0 0 1px #555;
`;

const PanelBack = styled.div`
    position: absolute;
    left: 23px;
    top: 14px;
    width: 21px;
    height: 21px;
    background: #fff;
    box-shadow: 0 0 0 1px #222;
`;

const ColorField = styled.div`
    position: relative;
    width: 160px;
    height: 111px;
    overflow: hidden;
    background:
        linear-gradient(to top, #000, rgba(0, 0, 0, 0)),
        linear-gradient(to right, #fff, #f00);
`;

const FieldPicker = styled.div`
    position: absolute;
    left: -8px;
    bottom: -1px;
    width: 12px;
    height: 11px;
    border: 1px solid #ddd;
    border-radius: 50%;
    margin-left: 4px;
`;

const HueSlider = styled.div`
    position: relative;
    width: 23px;
    height: 111px;
    margin-left: 24px;
    background: linear-gradient(to bottom, #f00, #f0f 17%, #00f 33%, #0ff 50%, #0f0 67%, #ff0 85%, #f00);
`;

const HueThumb = styled.div`
    position: absolute;
    left: -11px;
    bottom: -5px;
    width: 0;
    height: 0;
    border-left: 9px solid #e8e8e8;
    border-top: 5px solid transparent;
    border-bottom: 5px solid transparent;
`;

const LayersPanel = styled.section`
    flex: 1;
    min-height: 0;
    display: flex;
    flex-direction: column;
    background: #323232;
`;

const FilterRow = styled.div`
    height: 39px;
    flex: none;
    display: flex;
    align-items: flex-end;
    padding: 0 4px 1px 3px;
    border-bottom: 1px solid #2a2a2a;
    box-sizing: border-box;
`;

const FilterSelect = styled.div`
    width: 88px;
    height: 25px;
    display: flex;
    align-items: center;
    gap: 3px;
    padding: 0 5px 0 11px;
    box-sizing: border-box;
    background: #2a2a2a;
    border-radius: 3px;
    font-size: 12.5px;
    color: #c4c4c4;

    svg:last-child {
        margin-left: auto;
    }
`;

const FilterIcons = styled.div`
    flex: 1;
    height: 26px;
    display: flex;
    align-items: center;
    justify-content: space-between;
    padding: 0 3px 0 18px;
`;

const FilterLetter = styled.span`
    font: 700 17px "Liberation Serif", serif;
    color: #cacaca;
`;

const FilterToggle = styled.div`
    position: relative;
    width: 10px;
    height: 20px;
    border-radius: 5px;
    background: #222;

    &::before {
        content: "";
        position: absolute;
        left: 0;
        top: -2px;
        width: 10px;
        height: 10px;
        border-radius: 50%;
        background: #d8d8d8;
    }
`;

const BlendRow = styled.div`
    height: 36px;
    flex: none;
    display: flex;
    align-items: center;
    padding: 5px 0 0 3px;
    border-bottom: 1px solid #2a2a2a;
    box-sizing: border-box;
`;

const BlendSelect = styled.div`
    width: 144px;
    height: 25px;
    display: flex;
    align-items: center;
    justify-content: space-between;
    padding: 0 3px 0 11px;
    box-sizing: border-box;
    background: #2a2a2a;
    border-radius: 3px;
    font-size: 12.5px;
    color: #c4c4c4;
    flex: none;
`;

const OpacityLabel = styled.span`
    margin: 0 0 4px 9px;
    font-size: 12.5px;
    color: #8c8c8c;
    white-space: nowrap;
`;

const RowLabel = styled.span<{ $ml?: number }>`
    margin-left: ${p => p.$ml ?? 0}px;
    font-size: 11.5px;
    color: #8c8c8c;
    white-space: nowrap;
`;

const PercentBox = styled.div<{ $ml?: number }>`
    width: 37px;
    height: 18px;
    margin-left: ${p => p.$ml ?? 0}px;
    display: flex;
    align-items: center;
    justify-content: center;
    background: #2a2a2a;
    font-size: 10.5px;
    color: #c4c4c4;
    flex: none;
`;

const PercentDrop = styled.div`
    width: 17px;
    height: 18px;
    margin-left: 1px;
    display: flex;
    align-items: center;
    justify-content: center;
    background: #2a2a2a;
    flex: none;
`;

const LockRow = styled.div`
    height: 38px;
    flex: none;
    display: flex;
    align-items: center;
`;

const LockIcons = styled.div`
    width: 123px;
    margin-left: 13px;
    display: flex;
    justify-content: space-between;
    flex: none;
`;

const LockCell = styled.div`
    width: 18px;
    display: flex;
    justify-content: center;
    line-height: 0;
`;

const LayerArea = styled.div`
    flex: 1;
    min-height: 0;
    display: flex;
    background: #2e2e2e;
`;

const LayerList = styled.div`
    width: 258px;
    flex: none;
`;

const LayerRow = styled.div`
    height: 40px;
    display: flex;
    background: #2f2f2f;
`;

const EyeCell = styled.div`
    width: 37px;
    flex: none;
    display: flex;
    align-items: center;
    justify-content: center;
`;

const HiddenBox = styled.div`
    width: 15px;
    height: 15px;
    border: 1px solid #3b3b3b;
`;

const LayerBody = styled.div<{ $selected?: boolean }>`
    flex: 1;
    display: flex;
    align-items: center;
    gap: 12px;
    padding-left: 6px;
    background: ${p => p.$selected ? "#4b4b4b" : "transparent"};
`;

const StripeThumb = styled.div`
    width: 39px;
    height: 28px;
    flex: none;
    background: linear-gradient(to bottom, #a6dcf2 0 28%, #fbdcaa 28% 50%, #f8bccb 50% 72%, #3d5a98 72%);
`;

const CheckerThumb = styled.div`
    position: relative;
    width: 39px;
    height: 28px;
    flex: none;
    background: repeating-conic-gradient(#cfcfcf 0% 25%, #fff 0% 50%) 0 0 / 8px 8px;
    outline: 1px solid #ddd;
    outline-offset: 2px;
    line-height: 0;
`;

const ShapeBadge = styled.div`
    position: absolute;
    right: -2px;
    bottom: -3px;
    padding: 2px;
    background: #3a3a3a;
    line-height: 0;
`;

const WhiteThumb = styled.div`
    width: 39px;
    height: 28px;
    flex: none;
    background: #fff;
    box-shadow: 0 0 0 1px #555;
`;

const LayerName = styled.span`
    font-size: 12.5px;
    color: #c6c6c6;
    white-space: nowrap;
`;

const LayerLock = styled.div`
    margin-left: auto;
    margin-right: 19px;
    line-height: 0;
`;

const LayerScroll = styled.div`
    flex: 1;
    background: #2a2a2a;
`;

const LayerFooter = styled.div`
    height: 30px;
    flex: none;
    display: flex;
    align-items: center;
    justify-content: flex-end;
    gap: 16px;
    padding: 0 33px 4px 0;
    box-sizing: border-box;
    background: #323232;
`;

const FxLabel = styled.span`
    font: italic 400 17px "Liberation Serif", serif;
    color: #c4c4c4;
`;

const Watermark = styled.div`
    position: absolute;
    left: 1228px;
    top: 730px;
    width: 290px;
    display: flex;
    flex-direction: column;
    color: #c9c9c9;
    pointer-events: none;
`;

const WatermarkTop = styled.div`
    height: 92px;
    display: flex;
    align-items: flex-end;
`;

const BaiText = styled.span`
    width: 99px;
    font: 700 64px/46px "Liberation Sans", sans-serif;
    letter-spacing: -1px;
    margin-bottom: 3px;
`;

const PawSvg = styled.svg`
    width: 83px;
    height: 92px;
    flex: none;
`;

const DuText = styled.text`
    font: 700 38px "Liberation Sans", sans-serif;
    fill: #2b2b2b;
    stroke: #2b2b2b;
    stroke-width: 0.6;
`;

const JingyanCn = styled.span`
    font: 700 47px/47px "Noto Sans CJK SC", sans-serif;
    margin: 0 0 8px 3px;
    white-space: nowrap;
`;

const WatermarkUrl = styled.div`
    font: 400 33.6px/40px "Open Sans", sans-serif;
    white-space: nowrap;
    margin-top: 4px;
`;

export default App;
